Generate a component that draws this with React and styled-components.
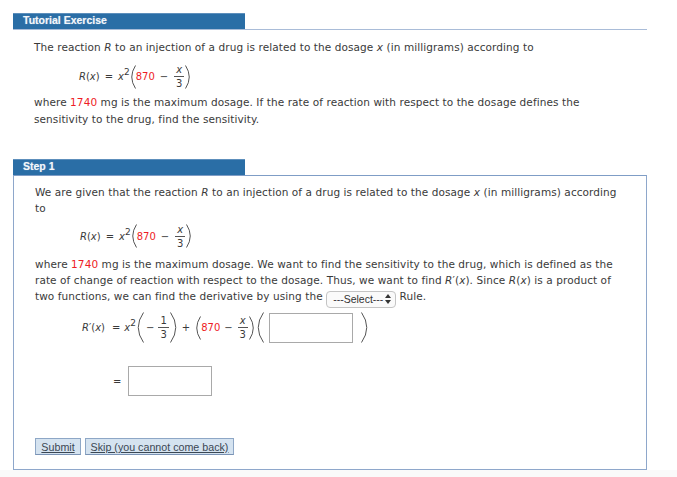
import React from 'react';
import styled, { createGlobalStyle } from 'styled-components';

const GlobalStyle = createGlobalStyle`
  html, body {
    margin: 0;
    padding: 0;
    background: #fff;
  }
  body {
    font-family: "DejaVu Sans", Verdana, sans-serif;
    font-size: 10.5px;
    color: #3a3a3a;
  }
`;

const Page = styled.div`
  width: 677px;
  height: 477px;
  padding: 13px 30px 0 13px;
  box-sizing: border-box;
  overflow: hidden;
`;

const HeadBar = styled.div`
  box-sizing: border-box;
  border-bottom: 1px solid #a9bcd8;
  height: 17px;
`;

const HeadTab = styled.div`
  width: 232px;
  height: 16px;
  box-sizing: border-box;
  padding-left: 10px;
  background: #2a6ea6;
  border-top: 1px solid #5d8fbc;
  font-family: "Liberation Sans", Arial, sans-serif;
  font-size: 10.5px;
  font-weight: 700;
  line-height: 12px;
  color: #f2f6fa;
  text-shadow: 0 0 1px rgba(255, 255, 255, 0.5);
`;

const Intro = styled.div`
  height: 129px;
  padding: 9px 0 0 21px;
  box-sizing: border-box;
`;

const StepBox = styled.div`
  height: 295px;
  box-sizing: border-box;
  border: 1px solid #8ea7cb;
  border-top-color: #7f9dc6;
  padding: 8px 20px 0 21px;
  margin-top: -1px;
`;

const PageFoot = styled.div`
  height: 8px;
  margin: 0 -30px 0 -13px;
  background: #fafafa;
`;

const Text = styled.div`
  line-height: 16.3px;
  letter-spacing: 0.085px;
  white-space: nowrap;
`;

const Red = styled.span`
  color: #ee1c25;
`;

const Formula = styled.div`
  display: flex;
  align-items: center;
  box-sizing: border-box;
  height: ${(p) => p.$height || '39px'};
  padding-left: ${(p) => p.$indent || '45px'};
  padding-top: ${(p) => p.$shift || '0'};
  font-size: 10px;
  white-space: nowrap;
`;

const Sup = styled.sup`
  font-size: 9px;
  line-height: 0;
  vertical-align: 5px;
`;

const Frac = styled.span`
  display: inline-flex;
  flex-direction: column;
  align-items: center;
  margin: 0 1px;
  line-height: 11px;
  font-size: 10px;
`;

const Num = styled.span`
  border-bottom: 1px solid #555;
  padding: 0 2px 1px;
`;

const Den = styled.span`
  padding-top: 1px;
`;

const MathPart = styled.span`
  margin: ${(p) => p.$margin || '0'};
`;

const AnswerBox = styled.input`
  box-sizing: border-box;
  width: 84px;
  height: 30px;
  padding: 0;
  margin: ${(p) => p.$margin || '0'};
  border: 1px solid #a9a9a9;
  background: #fff;
`;

const SelectButton = styled.span`
  display: inline-flex;
  align-items: center;
  justify-content: space-between;
  box-sizing: border-box;
  width: 70px;
  height: 17px;
  padding: 0 4px 0 6px;
  vertical-align: -3px;
  border: 1px solid #c4c4c4;
  border-radius: 4px;
  background: #fafafa;
  font-family: "Liberation Sans", Arial, sans-serif;
  font-size: 10.5px;
  letter-spacing: 0;
  color: #333;
`;

const Actions = styled.div`
  display: flex;
  gap: 4px;
  margin-top: 23.5px;
`;

const Button = styled.button`
  height: 17px;
  padding: 0;
  width: ${(p) => p.$width};
  box-sizing: border-box;
  border: 1px solid #8ea7c6;
  border-bottom-color: #7a93b5;
  background: #d5e3f0;
  font-family: "Liberation Sans", Arial, sans-serif;
  font-size: 10.7px;
  line-height: 14px;
  white-space: nowrap;
  color: #3b4754;
  text-decoration: underline;
`;

const Paren = ({ side = 'left', height = 24, width = 6 }) => (
  <svg width={width} height={height} viewBox={`0 0 ${width} ${height}`} fill="none" style={{ flex: 'none' }}>
    <path
      d={side === 'left'
        ? `M${width - 0.5} 0.5Q${-width / 2 + 1} ${height / 2} ${width - 0.5} ${height - 0.5}`
        : `M0.5 0.5Q${width + width / 2 - 1} ${height / 2} 0.5 ${height - 0.5}`}
      stroke="#555"
      strokeWidth="1"
    />
  </svg>
);

const Fn = ({ prime }) => (
  <MathPart>
    <i>R</i>{prime ? '′' : ''}(<i>x</i>)
  </MathPart>
);

const Product = ({ shift }) => (
  <Formula $shift={shift}>
    <Fn />
    <MathPart $margin="0 5px">=</MathPart>
    <MathPart><i>x</i><Sup>2</Sup></MathPart>
    <Paren />
    <Red>870</Red>
    <MathPart $margin="0 5px">−</MathPart>
    <Frac><Num><i>x</i></Num><Den>3</Den></Frac>
    <Paren side="right" />
  </Formula>
);

const Arrows = () => (
  <svg width="6" height="10" viewBox="0 0 6 10" fill="#333">
    <path d="M3 0 6 4H0zM3 10 0 6h6z" />
  </svg>
);

export default function App() {
  return (
    <>
      <GlobalStyle />
      <Page>
        <HeadBar><HeadTab>Tutorial Exercise</HeadTab></HeadBar>
        <Intro>
          <Text>The reaction <i>R</i> to an injection of a drug is related to the dosage <i>x</i> (in milligrams) according to</Text>
          <Product shift="4px" />
          <Text>where <Red>1740</Red> mg is the maximum dosage. If the rate of reaction with respect to the dosage defines the</Text>
          <Text>sensitivity to the drug, find the sensitivity.</Text>
        </Intro>
        <HeadBar><HeadTab>Step 1</HeadTab></HeadBar>
        <StepBox>
          <Text>We are given that the reaction <i>R</i> to an injection of a drug is related to the dosage <i>x</i> (in milligrams) according</Text>
          <Text>to</Text>
          <Product />
          <Text>where <Red>1740</Red> mg is the maximum dosage. We want to find the sensitivity to the drug, which is defined as the</Text>
          <Text>rate of change of reaction with respect to the dosage. Thus, we want to find <i>R</i>′(<i>x</i>). Since <i>R</i>(<i>x</i>) is a product of</Text>
          <Text>two functions, we can find the derivative by using the <SelectButton>---Select---<Arrows /></SelectButton> Rule.</Text>
          <Formula $height="40px" $indent="47px">
            <Fn prime />
            <MathPart $margin="0 4px 0 7px">=</MathPart>
            <MathPart><i>x</i><Sup>2</Sup></MathPart>
            <Paren height={31} width={8} />
            <MathPart $margin="0 3px 0 2px">−</MathPart>
            <Frac><Num>1</Num><Den>3</Den></Frac>
            <Paren side="right" height={31} width={8} />
            <MathPart $margin="0 5px 0 4px">+</MathPart>
            <Paren height={24} width={6} />
            <Red>870</Red>
            <MathPart $margin="0 4px">−</MathPart>
            <Frac><Num><i>x</i></Num><Den>3</Den></Frac>
            <Paren side="right" height={24} width={6} />
            <MathPart $margin="0 1px 0 0" />
            <Paren height={31} width={8} />
            <AnswerBox $margin="0 8px 0 5px" />
            <Paren side="right" height={31} width={8} />
          </Formula>
          <Formula $height="67px" $indent="78px">
            <MathPart $margin="0 7px 0 0">=</MathPart>
            <AnswerBox />
          </Formula>
          <Actions>
            <Button $width="46px">Submit</Button>
            <Button $width="149px">Skip (you cannot come back)</Button>
          </Actions>
        </StepBox>
        <PageFoot />
      </Page>
    </>
  );
}
